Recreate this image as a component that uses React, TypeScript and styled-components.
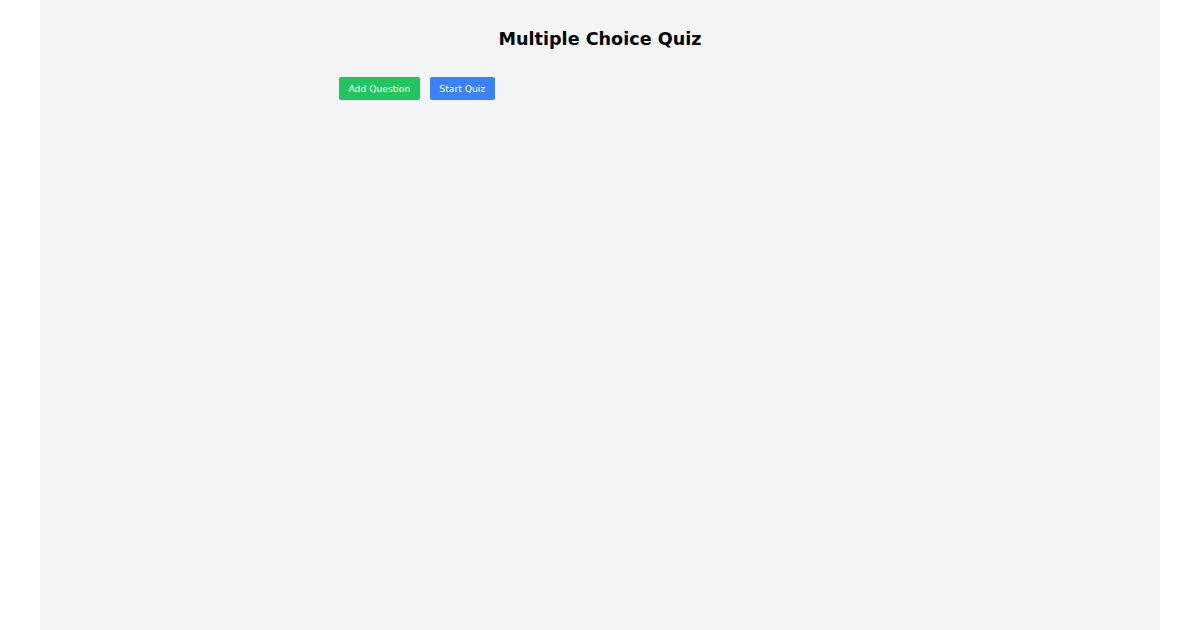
import styled, { createGlobalStyle } from 'styled-components';

const GlobalStyle = createGlobalStyle`
  html, body {
    margin: 0;
    padding: 0;
    background: #ffffff;
    font-family: 'DejaVu Sans', 'Liberation Sans', sans-serif;
  }
`;

const StyledPage = styled.div`
  width: 1120px;
  min-height: 630px;
  margin: 0 auto;
  background: #f3f4f6;
  padding-top: 27px;
  box-sizing: border-box;
`;

const StyledTitle = styled.h1`
  margin: 0;
  text-align: center;
  font-size: 17.6px;
  line-height: 24px;
  font-weight: bold;
  color: #000000;
`;

const StyledContent = styled.div`
  width: 522px;
  margin: 26px auto 0;
`;

const StyledToolbar = styled.div`
  display: flex;
  gap: 10px;
`;

const StyledButton = styled.button<{ $tone: 'green' | 'blue' }>`
  height: 23px;
  padding: 0 9.5px;
  border: none;
  border-radius: 2px;
  background: ${({ $tone }) => ($tone === 'green' ? '#22c55e' : '#3b82f6')};
  color: #ffffff;
  font-family: 'DejaVu Sans', sans-serif;
  font-size: 9.2px;
  cursor: pointer;
`;

const App = () => {
  return (
    <>
      <GlobalStyle />
      <StyledPage>
        <StyledTitle>Multiple Choice Quiz</StyledTitle>
        <StyledContent>
          <StyledToolbar>
            <StyledButton $tone="green">Add Question</StyledButton>
            <StyledButton $tone="blue">Start Quiz</StyledButton>
          </StyledToolbar>
        </StyledContent>
      </StyledPage>
    </>
  );
};

export default App;
